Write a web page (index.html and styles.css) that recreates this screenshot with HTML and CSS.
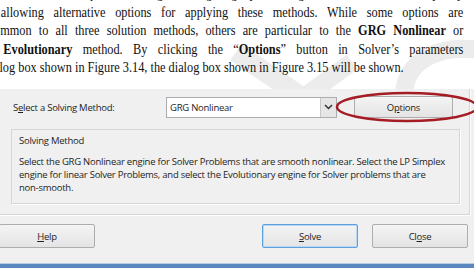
FILE: index.html
```html
<!DOCTYPE html>
<html>
<head>
  <meta charset="UTF-8" />
  <title>Solver Options</title>
  <link rel="stylesheet" href="styles.css">
</head>
<body>
  <div class="excerpt">
    <svg class="watermark" width="474" height="89" viewBox="0 0 474 89">
      <path d="M236 52 L300 96" stroke="#ececec" stroke-width="20" fill="none" />
      <path d="M352 62 L300 100" stroke="#ececec" stroke-width="18" fill="none" />
      <path d="M404 96 C404 60 440 44 480 50" stroke="#ececec" stroke-width="18" fill="none" />
    </svg>
    <div class="text">
      <span class="line">there is an Options dialog box giving you a great deal of flexibility by</span>
      <span class="line l2">allowing alternative options for applying these methods. While some options are</span>
      <span class="line l3">common to all three solution methods, others are particular to the <b>GRG Nonlinear</b> or</span>
      <span class="line l4"><b>Evolutionary</b> method. By clicking the “<b>Options</b>” button in Solver’s parameters</span>
      <span class="line l5 last">dialog box shown in Figure 3.14, the dialog box shown in Figure 3.15 will be shown.</span>
    </div>
  </div>
  <div class="dialog">
    <div class="panel">
      <div class="method-row">
        <label class="method-label">S<u>e</u>lect a Solving Method:</label>
        <div class="combo">
          <span class="combo-value">GRG Nonlinear</span>
          <span class="combo-arrow">
            <svg width="9" height="6" viewBox="0 0 9 6"><path d="M1 1 L4.5 4.5 L8 1" stroke="#333" stroke-width="1.5" fill="none" /></svg>
          </span>
        </div>
        <button class="btn options-btn">O<u>p</u>tions</button>
      </div>
      <div class="group">
        <div class="group-title">Solving Method</div>
        <div class="group-desc">Select the GRG Nonlinear engine for Solver Problems that are smooth nonlinear. Select the LP Simplex<br>engine for linear Solver Problems, and select the Evolutionary engine for Solver problems that are<br>non-smooth.</div>
      </div>
    </div>
    <div class="footer">
      <button class="btn help-btn"><u>H</u>elp</button>
      <button class="btn default-btn"><u>S</u>olve</button>
      <button class="btn">Cl<u>o</u>se</button>
    </div>
    <div class="taskbar"></div>
  </div>
  <svg class="highlight" width="142" height="40" viewBox="0 0 142 40">
    <ellipse cx="72" cy="18" rx="70" ry="14" stroke="#a51d24" stroke-width="2.5" fill="none" />
  </svg>
</body>
</html>
```
FILE: styles.css
```css
body {
  margin: 0;
  width: 474px;
  height: 268px;
  overflow: hidden;
  background: #fff;
  position: relative;
}
.excerpt {
  height: 89px;
  overflow: hidden;
  position: relative;
}
.watermark {
  position: absolute;
  top: 0;
  left: 0;
}
/* the page scan is squeezed sideways, so the serif text is too */
.text {
  position: relative;
  width: 565px;
  margin-top: -16px;
  transform: scaleX(0.82);
  transform-origin: 0 0;
  font-family: "Liberation Serif", serif;
  font-size: 15px;
  line-height: 18.5px;
  color: #111;
}
.line {
  display: block;
  white-space: nowrap;
  text-align: justify;
  text-align-last: justify;
}
.l2 {
  margin-left: 1px;
}
.l3 {
  margin-left: -14px;
}
.l4 {
  margin-left: 4px;
}
.l5 {
  margin-left: -19px;
}
.last {
  text-align-last: left;
}
.dialog {
  background: #f0f0f0;
  height: 179px;
  display: flex;
  flex-direction: column;
  font-family: "Open Sans", sans-serif;
  font-size: 9.5px;
  letter-spacing: -0.25px;
  color: #1e1e1e;
}
.panel {
  margin-left: -1px;
  width: 471px;
  height: 126px;
  box-sizing: border-box;
  border: 1px solid #d6d6d6;
  border-top: none;
  box-shadow: 1px 1px 0 #fff;
}
.method-row {
  display: flex;
  align-items: center;
  height: 22px;
  margin-top: 7px;
  padding-left: 13px;
}
.method-label {
  width: 153px;
}
.combo {
  display: flex;
  width: 171px;
  height: 21px;
  box-sizing: border-box;
  border: 1px solid #abadb3;
  background: #fff;
}
.combo-value {
  flex: 1;
  padding-left: 3px;
  line-height: 19px;
}
.combo-arrow {
  width: 15px;
  display: flex;
  align-items: center;
  justify-content: center;
  background: #e6e6e6;
  border-left: 1px solid #c8c8c8;
}
.btn {
  font-family: "Open Sans", sans-serif;
  font-size: 9.5px;
  letter-spacing: -0.25px;
  color: #1e1e1e;
  width: 96px;
  height: 24px;
  padding: 0;
  border: 1px solid #adadad;
  border-radius: 2px;
  background: linear-gradient(#f4f4f4, #e4e4e4);
}
.options-btn {
  width: 99px;
  height: 22px;
  margin-left: 17px;
}
.group {
  margin: 11px 0 0 11px;
  width: 449px;
  height: 75px;
  box-sizing: border-box;
  border: 1px solid #d6d6d6;
  box-shadow: 1px 1px 0 #fff;
  padding: 4px 0 0 7px;
}
.group-title {
  line-height: 13px;
}
.group-desc {
  margin-top: 8px;
  line-height: 13px;
  white-space: nowrap;
}
.footer {
  display: flex;
  gap: 14px;
  margin-top: 9px;
  height: 24px;
}
.help-btn {
  margin-left: -1px;
  margin-right: 153px;
}
.default-btn {
  border-color: #5ea0dd;
  box-shadow: inset 0 0 0 1px #b9d8f5;
}
.taskbar {
  margin-top: auto;
  height: 4px;
  border-top: 1px solid #b8cbe3;
  background: #5b87bf;
}
.highlight {
  position: absolute;
  left: 335px;
  top: 89px;
}
```
